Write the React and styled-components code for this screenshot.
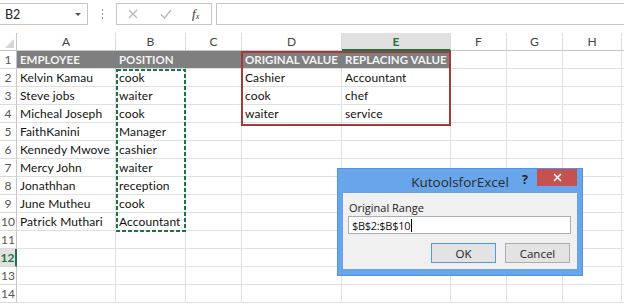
import React from 'react';
import styled, { createGlobalStyle, css } from 'styled-components';

const Global = createGlobalStyle`
  html, body { margin: 0; padding: 0; background: #fff; }
  body { width: 624px; height: 304px; overflow: hidden; font-family: Lato, "Open Sans", sans-serif; }
  * { box-sizing: border-box; }
`;

const Screen = styled.div`
  position: relative;
  width: 624px;
  height: 304px;
  overflow: hidden;
  background: #fff;
`;

/* ---------- formula bar ---------- */
const FormulaBar = styled.div`
  display: flex;
  align-items: flex-start;
  height: 33px;
  padding-top: 3px;
`;

const NameBox = styled.div`
  width: 88px;
  height: 22px;
  border: 1px solid #c6c6c6;
  border-left: none;
  display: flex;
  align-items: center;
  justify-content: space-between;
  padding: 0 6px 0 5px;
  font-size: 12.5px;
  color: #222;
`;

const Arrow = styled.span`
  width: 0;
  height: 0;
  border-left: 3px solid transparent;
  border-right: 3px solid transparent;
  border-top: 3px solid #555;
`;

const Grip = styled.div`
  width: 28px;
  height: 22px;
  display: flex;
  flex-direction: column;
  align-items: center;
  justify-content: center;
  gap: 2px;
`;

const GripDot = styled.span`
  width: 1px;
  height: 2px;
  background: #9a9a9a;
`;

const FxBox = styled.div`
  width: 96px;
  height: 22px;
  border: 1px solid #c6c6c6;
  display: flex;
  align-items: center;
  padding-left: 11px;
  gap: 22px;
`;

const Fx = styled.span`
  font-family: "Liberation Serif", serif;
  font-style: italic;
  font-size: 13px;
  color: #333;
  margin-left: -2px;
  sub { font-size: 8px; vertical-align: -1px; }
`;

const FormulaInput = styled.div`
  flex: 1;
  height: 22px;
  margin-left: 4px;
  border: 1px solid #c6c6c6;
  border-right: none;
`;

/* ---------- sheet ---------- */
const Sheet = styled.div`
  display: grid;
  grid-template-columns: 17px 99px 70px 56px 100px 109px 56px 56px 59px 1fr;
  grid-auto-rows: 18px;
`;

const Corner = styled.div`
  border-right: 1px solid #c6c6c6;
  border-bottom: 1px solid #c6c6c6;
  display: flex;
  align-items: flex-end;
  justify-content: flex-end;
  padding: 0 2px 2px 0;
`;

const ColHead = styled.div`
  display: flex;
  align-items: center;
  justify-content: center;
  font-size: 12px;
  color: #444;
  border-right: 1px solid #dadada;
  border-bottom: 1px solid #c6c6c6;
  ${(p) =>
    p.$active &&
    css`
      background: #e1e1e1;
      color: #217346;
      font-weight: 700;
      border-bottom: 2px solid #217346;
    `}
`;

const RowHead = styled.div`
  display: flex;
  align-items: center;
  justify-content: center;
  font-size: 12px;
  color: #555;
  border-right: 1px solid #c6c6c6;
  border-bottom: 1px solid #dadada;
  ${(p) =>
    p.$active &&
    css`
      background: #e1e1e1;
      color: #217346;
      font-weight: 700;
      border-right: 2px solid #217346;
    `}
`;

const Cell = styled.div`
  display: flex;
  align-items: center;
  padding-left: 3px;
  font-size: 12px;
  letter-spacing: 0.1px;
  color: #111;
  white-space: nowrap;
  overflow: hidden;
  border-right: 1px solid #e0e0e0;
  border-bottom: 1px solid #e0e0e0;
  ${(p) =>
    p.$head &&
    css`
      background: #7f7f7f;
      color: #f2f2f2;
      font-weight: 700;
      font-size: 11.5px;
      letter-spacing: 0;
      border-right-color: #7f7f7f;
      border-bottom-color: #e0e0e0;
    `}
`;

const RangeBox = styled.div`
  position: absolute;
  left: 241px;
  top: 51px;
  width: 210px;
  height: 75px;
  border: 2px solid #a23b3b;
  pointer-events: none;
`;

const CopyMarquee = styled.svg`
  position: absolute;
  left: 116px;
  top: 69px;
  pointer-events: none;
`;

/* ---------- dialog ---------- */
const Dialog = styled.div`
  position: absolute;
  left: 337px;
  top: 168px;
  width: 246px;
  height: 108px;
  background: #68a5ea;
  border: 1px solid #5593dc;
  display: flex;
  flex-direction: column;
  padding: 0 5px 6px;
  font-family: "Open Sans", "Noto Sans", sans-serif;
`;

const TitleBar = styled.div`
  height: 24px;
  display: grid;
  grid-template-columns: 1fr auto 1fr;
`;

const Title = styled.div`
  align-self: center;
  font-size: 13.5px;
  color: #2b2b2b;
  padding-top: 2px;
`;

const Controls = styled.div`
  justify-self: end;
  display: flex;
  align-items: flex-start;
`;

const Help = styled.span`
  font-size: 12.5px;
  font-weight: 700;
  color: #222;
  margin: 2px 9px 0 0;
`;

const Close = styled.div`
  width: 40px;
  height: 17px;
  background: #c75050;
  display: flex;
  align-items: center;
  justify-content: center;
`;

const Panel = styled.div`
  flex: 1;
  background: #f0f0f0;
  padding: 7px 6px 0 5px;
  display: flex;
  flex-direction: column;
`;

const Label = styled.div`
  font-size: 11px;
  color: #222;
  line-height: 16px;
  padding-left: 1px;
`;

const Input = styled.div`
  height: 18px;
  background: #fff;
  border: 1px solid #abadb3;
  display: flex;
  align-items: center;
  padding-left: 3px;
  font-size: 11px;
  letter-spacing: -0.3px;
  color: #111;
`;

const Caret = styled.span`
  width: 1px;
  height: 13px;
  background: #000;
  margin-left: 1px;
`;

const ButtonRow = styled.div`
  display: flex;
  justify-content: flex-end;
  gap: 9px;
  margin-top: 9px;
  padding-right: 1px;
`;

const Button = styled.div`
  width: 65px;
  height: 20px;
  display: flex;
  align-items: center;
  justify-content: center;
  background: #e3e3e3;
  border: 1px solid ${(p) => (p.$default ? '#4a9be9' : '#adadad')};
  font-size: 11.5px;
  color: #222;
`;

const headers = ['A', 'B', 'C', 'D', 'E', 'F', 'G', 'H', ''];

const rows = [
  ['EMPLOYEE', 'POSITION', '', 'ORIGINAL VALUE', 'REPLACING VALUE'],
  ['Kelvin Kamau', 'cook', '', 'Cashier', 'Accountant'],
  ['Steve jobs', 'waiter', '', 'cook', 'chef'],
  ['Micheal Joseph', 'cook', '', 'waiter', 'service'],
  ['FaithKanini', 'Manager'],
  ['Kennedy Mwove', 'cashier'],
  ['Mercy John', 'waiter'],
  ['Jonathhan', 'reception'],
  ['June Mutheu', 'cook'],
  ['Patrick Muthari', 'Accountant'],
  [],
  [],
  [],
  [],
];

export default function App() {
  return (
    <Screen>
      <Global />
      <FormulaBar>
        <NameBox>
          <span>B2</span>
          <Arrow />
        </NameBox>
        <Grip>
          <GripDot />
          <GripDot />
          <GripDot />
        </Grip>
        <FxBox>
          <svg width="10" height="10" viewBox="0 0 10 10">
            <path d="M1 1 L9 9 M9 1 L1 9" stroke="#b5b5b5" strokeWidth="1.2" fill="none" />
          </svg>
          <svg width="12" height="10" viewBox="0 0 12 10">
            <path d="M1 5.5 L4.5 9 L11 1" stroke="#b5b5b5" strokeWidth="1.2" fill="none" />
          </svg>
          <Fx>
            f<sub>x</sub>
          </Fx>
        </FxBox>
        <FormulaInput />
      </FormulaBar>

      <Sheet>
        <Corner>
          <svg width="9" height="9" viewBox="0 0 9 9">
            <polygon points="9,0 9,9 0,9" fill="#d6d6d6" />
          </svg>
        </Corner>
        {headers.map((h, i) => (
          <ColHead key={'h' + i} $active={h === 'E'}>
            {h}
          </ColHead>
        ))}
        {rows.map((r, ri) => (
          <React.Fragment key={'r' + ri}>
            <RowHead $active={ri + 1 === 12}>{ri + 1}</RowHead>
            {Array.from({ length: 9 }).map((_, ci) => (
              <Cell key={ci} $head={ri === 0 && ci < 5}>
                {r[ci] || ''}
              </Cell>
            ))}
          </React.Fragment>
        ))}
      </Sheet>

      <RangeBox />
      <CopyMarquee width="70" height="163" viewBox="0 0 70 163">
        <rect x="1" y="1" width="68" height="161" fill="none" stroke="#1f7244" strokeWidth="2" strokeDasharray="4 2" />
      </CopyMarquee>

      <Dialog>
        <TitleBar>
          <span />
          <Title>KutoolsforExcel</Title>
          <Controls>
            <Help>?</Help>
            <Close>
              <svg width="9" height="9" viewBox="0 0 9 9">
                <path d="M1 1 L8 8 M8 1 L1 8" stroke="#fff" strokeWidth="1.6" fill="none" />
              </svg>
            </Close>
          </Controls>
        </TitleBar>
        <Panel>
          <Label>Original Range</Label>
          <Input>
            $B$2:$B$10
            <Caret />
          </Input>
          <ButtonRow>
            <Button $default>OK</Button>
            <Button>Cancel</Button>
          </ButtonRow>
        </Panel>
      </Dialog>
    </Screen>
  );
}
